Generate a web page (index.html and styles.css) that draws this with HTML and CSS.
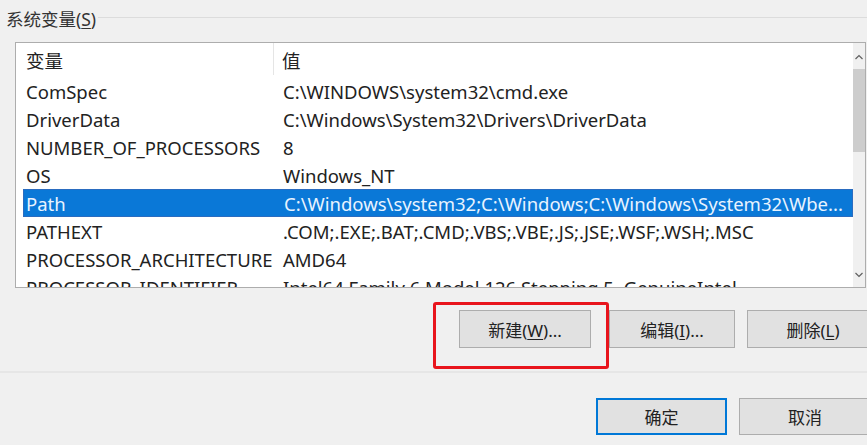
FILE: index.html
```html
<!DOCTYPE html>
<html lang="zh-CN">
<head>
  <meta charset="UTF-8" />
  <title>系统变量</title>
  <link rel="stylesheet" href="styles.css">
</head>
<body>
  <div class="page">

    <!-- 分组标题 -->
    <div class="group-title">
      <span>系统变量(<u>S</u>)</span>
      <i class="group-line"></i>
    </div>

    <!-- 变量列表 -->
    <div class="listbox">
      <div class="list">
        <div class="row head">
          <div class="c1">变量</div>
          <div class="c2">值</div>
        </div>
        <div class="row"><div class="c1">ComSpec</div><div class="c2">C:\WINDOWS\system32\cmd.exe</div></div>
        <div class="row"><div class="c1">DriverData</div><div class="c2">C:\Windows\System32\Drivers\DriverData</div></div>
        <div class="row"><div class="c1">NUMBER_OF_PROCESSORS</div><div class="c2">8</div></div>
        <div class="row"><div class="c1">OS</div><div class="c2">Windows_NT</div></div>
        <div class="row selected"><div class="c1">Path</div><div class="c2">C:\Windows\system32;C:\Windows;C:\Windows\System32\Wbe...</div></div>
        <div class="row"><div class="c1">PATHEXT</div><div class="c2">.COM;.EXE;.BAT;.CMD;.VBS;.VBE;.JS;.JSE;.WSF;.WSH;.MSC</div></div>
        <div class="row"><div class="c1">PROCESSOR_ARCHITECTURE</div><div class="c2">AMD64</div></div>
        <div class="row"><div class="c1">PROCESSOR_IDENTIFIER</div><div class="c2">Intel64 Family 6 Model 126 Stepping 5, GenuineIntel</div></div>
      </div>
      <div class="scrollbar">
        <svg class="arrow" width="12" height="12" viewBox="0 0 12 12"><path d="M2.5 8 L6 4.5 L9.5 8" fill="none" stroke="#606060" stroke-width="1.2"/></svg>
        <div class="track"><div class="thumb"></div></div>
        <svg class="arrow" width="12" height="12" viewBox="0 0 12 12"><path d="M2.5 4 L6 7.5 L9.5 4" fill="none" stroke="#606060" stroke-width="1.2"/></svg>
      </div>
    </div>

    <!-- 操作按钮 -->
    <div class="actions">
      <button class="btn w132">新建(<u>W</u>)...</button>
      <button class="btn w126 gap18">编辑(<u>I</u>)...</button>
      <button class="btn w132">删除(<u>L</u>)</button>
      <div class="mark"></div>
    </div>

    <div class="sep"></div>

    <div class="footer">
      <button class="btn w131 primary">确定</button>
      <button class="btn w132">取消</button>
    </div>

  </div>
</body>
</html>
```

FILE: styles.css
```css
body {
  margin:0; padding:0;
  background:#f0f0f0;
  font-family: "Noto Sans", "Noto Sans CJK SC", sans-serif;
  color:#222;
}
.page {
  width:867px;
  height:445px;
  overflow:hidden;
  position:relative;
}
u { text-decoration:underline; text-underline-offset:2px; }

.group-title {
  display:flex;
  align-items:center;
  padding:8px 0 0 6px;
  height:20px;
  font-size:17.5px;
  color:#333;
}
.group-title span { white-space:nowrap; }
.group-line {
  flex:1;
  height:0;
  border-top:1px solid #dcdcdc;
  margin-left:2px;
  margin-top:-2px;
}

.listbox {
  margin:14px 0 0 15px;
  width:849px;
  height:244px;
  border:1px solid #adadad;
  background:#fff;
  display:flex;
  overflow:hidden;
}
.list {
  flex:1;
  padding-left:7px;
  overflow:hidden;
}
.row {
  display:flex;
  height:28px;
  align-items:center;
  font-size:18.5px;
  white-space:nowrap;
  box-sizing:border-box;
}
.row .c1 { width:251px; padding-left:3px; box-sizing:border-box; }
.row .c2 { padding-left:9px; }
.row.head { height:34px; align-items:center; }
.row.head .c1 { height:32px; line-height:36px; border-right:1px solid #e5e5e5; margin-top:-2px; }
.row.head .c2 { padding-left:8px; }
.row.selected {
  background:#0a78d7;
  color:#e8f3ff;
  border:1px solid #2a6cc0;
}
.row.selected .c1 { padding-left:2px; }

.scrollbar {
  width:12px;
  background:#f0f0f0;
  display:flex;
  flex-direction:column;
  align-items:center;
}
.arrow { margin:8px 0 4px; flex:none; }
.scrollbar .arrow:last-child { margin:4px 0 6px; }
.track { flex:1; width:12px; }
.thumb {
  margin-top:2px;
  height:83px;
  background:#cdcdcd;
}

.actions {
  position:relative;
  display:flex;
  gap:12px;
  padding:22px 0 0 459px;
  height:38px;
}
.btn {
  flex:none;
  height:38px;
  background:#e1e1e1;
  border:1px solid #adadad;
  font-family:inherit;
  font-size:17px;
  color:#222;
  padding:0;
  white-space:nowrap;
}
.w126 { width:126px; }
.w131 { width:131px; }
.w132 { width:132px; }
.gap18 { margin-left:6px; }
.btn.primary { border:2px solid #0078d7; }

.mark {
  position:absolute;
  left:433px;
  top:14px;
  width:170px;
  height:61px;
  border:3px solid #e8141c;
  border-radius:3px;
}

.sep {
  margin-top:23px;
  height:2px;
  background:#e6e6e6;
}

.footer {
  display:flex;
  gap:12px;
  padding:25px 0 0 596px;
}
.footer .btn { height:37px; }
```
